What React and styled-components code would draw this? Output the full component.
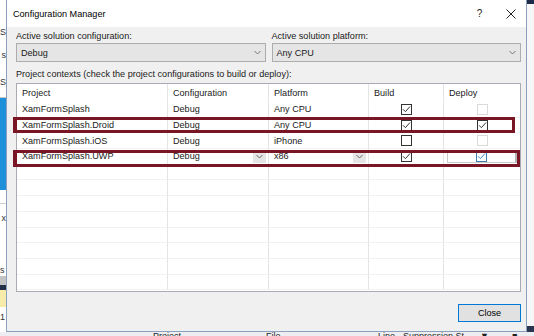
import React from 'react';
import styled, { createGlobalStyle } from 'styled-components';

const Global = createGlobalStyle`
  html, body { margin: 0; padding: 0; background: #ffffff; overflow: hidden; }
  body { font-family: "Liberation Sans", Arial, sans-serif; font-size: 9.1px; color: #1a1a1a; }
  * { box-sizing: border-box; }
`;

const Screen = styled.div`
  width: 534px;
  height: 336px;
  display: flex;
  flex-direction: column;
  overflow: hidden;
  background: #ffffff;
`;

const Main = styled.div`
  display: flex;
  height: 332px;
  flex: none;
`;

const Strip = styled.div`
  width: ${p => p.$w}px;
  flex: none;
  display: flex;
  flex-direction: column;
  overflow: hidden;
  background: #ffffff;
`;

const StripBlock = styled.div`
  flex: none;
  height: ${p => p.$h}px;
  background: ${p => p.$bg || 'transparent'};
  display: flex;
  justify-content: ${p => (p.$end ? 'flex-end' : 'flex-start')};
  align-items: center;
  white-space: nowrap;
  line-height: ${p => p.$h}px;
  color: #333;
  font-size: 9px;
`;

const Dialog = styled.div`
  width: 521px;
  flex: none;
  display: flex;
  flex-direction: column;
  border-left: 1px solid #8aa1bd;
  border-right: 1px solid #8aa1bd;
  border-bottom: 1px solid #8aa1bd;
  background: #f0f0f0;
`;

const TitleBar = styled.div`
  height: 27px;
  flex: none;
  display: flex;
  align-items: center;
  background: #ffffff;
  padding-left: 6px;
`;

const Title = styled.div`
  flex: 1;
  color: #000;
`;

const TitleButton = styled.div`
  width: 31px;
  height: 27px;
  display: flex;
  align-items: center;
  justify-content: center;
  color: #222;
  font-size: 10px;
`;

const Body = styled.div`
  flex: 1;
  display: flex;
  flex-direction: column;
  padding: 3px 5px 0 9px;
`;

const TopRow = styled.div`
  display: grid;
  grid-template-columns: 1fr 1fr;
  column-gap: 6px;
`;

const Field = styled.div`
  display: flex;
  flex-direction: column;
`;

const Label = styled.div`
  height: 12px;
  line-height: 12px;
  margin-top: ${p => p.$mt || 0}px;
  white-space: nowrap;
`;

const Select = styled.div`
  margin-top: 1px;
  height: 19px;
  border: 1px solid #adadad;
  background: #e5e5e5;
  display: flex;
  align-items: center;
  padding: 0 4px 0 4px;
`;

const SelectText = styled.div`
  flex: 1;
`;

const GridBox = styled.div`
  position: relative;
  margin-top: 3px;
  height: 209px;
  border: 1px solid #a8abb2;
  background: #ffffff;
`;

const Table = styled.div`
  display: grid;
  grid-template-columns: 151px 101px 100px 75px 1fr;
  grid-template-rows: 18px repeat(12, 15.7px);
`;

const Cell = styled.div`
  position: relative;
  border-right: ${p => (p.$last ? 'none' : '1px solid #e4e4e4')};
  border-bottom: 1px solid ${p => (p.$head ? '#ffffff' : '#f2f2f2')};
  display: flex;
  align-items: center;
  justify-content: ${p => (p.$center ? 'center' : 'flex-start')};
  padding-left: ${p => (p.$center ? 0 : 5)}px;
  white-space: nowrap;
  overflow: hidden;
`;

const CellText = styled.div`
  flex: 1;
`;

const DropButton = styled.div`
  width: 13px;
  height: 13px;
  margin-right: 2px;
  background: #e5e5e5;
  display: flex;
  align-items: center;
  justify-content: center;
`;

const EditFrame = styled.div`
  position: absolute;
  left: 3px;
  right: 3px;
  top: 1px;
  bottom: 1px;
  border: 1px solid #c9c9c9;
  border-right: 2px solid #b5b5b5;
  display: flex;
  align-items: center;
  justify-content: center;
`;

const Box = styled.div`
  width: 11px;
  height: 11px;
  border: 1px solid ${p => p.$color};
  background: #ffffff;
  display: flex;
  align-items: center;
  justify-content: center;
`;

const Highlight = styled.div`
  position: absolute;
  left: ${p => p.$x}px;
  top: ${p => p.$y}px;
  width: ${p => p.$w}px;
  height: ${p => p.$h}px;
  border: 3px solid #7a1526;
  border-left-width: 4px;
  pointer-events: none;
`;

const Footer = styled.div`
  display: flex;
  justify-content: flex-end;
  padding-top: 12px;
`;

const Button = styled.div`
  width: 63px;
  height: 18px;
  border: 1px solid #0078d7;
  background: #e1e1e1;
  display: flex;
  align-items: center;
  justify-content: center;
  color: #000;
`;

const BottomBar = styled.div`
  height: 4px;
  flex: none;
  background: #eeeef2;
  display: grid;
  grid-template-columns: 153px 113px 112px 25px 77px 32px 1fr;
  overflow: hidden;
`;

const BottomText = styled.div`
  line-height: 8px;
  white-space: nowrap;
  color: #1e1e1e;
  font-size: 9px;
`;

const Chevron = ({ color = '#666' }) => (
  <svg width="7" height="5" viewBox="0 0 7 5">
    <path d="M0.5 1 L3.5 4 L6.5 1" fill="none" stroke={color} strokeWidth="1" />
  </svg>
);

const CloseX = () => (
  <svg width="10" height="10" viewBox="0 0 10 10">
    <path d="M0.5 0.5 L9.5 9.5 M9.5 0.5 L0.5 9.5" stroke="#222" strokeWidth="1" />
  </svg>
);

const Check = ({ state }) => {
  const disabled = state === 'disabled';
  const hover = state === 'hover';
  const checked = state === 'checked' || hover;
  const border = disabled ? '#dadada' : hover ? '#3c7fb1' : '#333';
  const tick = hover ? '#3c8fd0' : '#333';
  return (
    <Box $color={border}>
      {checked && (
        <svg width="9" height="9" viewBox="0 0 9 9">
          <path d="M1 4.3 L3.4 6.7 L8 1.5" fill="none" stroke={tick} strokeWidth="1" />
        </svg>
      )}
    </Box>
  );
};

const rows = [
  { project: 'XamFormSplash', config: 'Debug', platform: 'Any CPU', build: 'checked', deploy: 'disabled' },
  { project: 'XamFormSplash.Droid', config: 'Debug', platform: 'Any CPU', build: 'checked', deploy: 'checked' },
  { project: 'XamFormSplash.iOS', config: 'Debug', platform: 'iPhone', build: 'unchecked', deploy: 'disabled' },
  { project: 'XamFormSplash.UWP', config: 'Debug', platform: 'x86', build: 'checked', deploy: 'hover', active: true },
];

const leftStrip = [
  { h: 26 }, { h: 12, t: 'S' }, { h: 11 }, { h: 12, t: 's', end: true }, { h: 15 },
  { h: 12, t: 'S' }, { h: 9 }, { h: 1, bg: '#c8c8c8' }, { h: 92, bg: '#1e8fd9' },
  { h: 13 }, { h: 1, bg: '#d0d0d0' }, { h: 8 }, { h: 12, t: 'x', end: true }, { h: 40 },
  { h: 12, t: 's' }, { h: 9, bg: '#c4c4c4' }, { h: 5, bg: '#24304a' }, { h: 17, bg: '#f6eba8' },
  { h: 4 }, { h: 12, t: '1' }, { h: 9 },
];

const rightStrip = [
  { h: 4, bg: '#1d2b4a' }, { h: 322, bg: '#f7f7f7' }, { h: 6, bg: '#2a3550' },
];

export default function App() {
  const empty = Array.from({ length: 8 });
  return (
    <>
      <Global />
      <Screen>
        <Main>
          <Strip $w={6}>
            {leftStrip.map((s, i) => (
              <StripBlock key={i} $h={s.h} $bg={s.bg} $end={s.end}>{s.t || null}</StripBlock>
            ))}
          </Strip>
          <Dialog>
            <TitleBar>
              <Title>Configuration Manager</Title>
              <TitleButton>?</TitleButton>
              <TitleButton><CloseX /></TitleButton>
            </TitleBar>
            <Body>
              <TopRow>
                <Field>
                  <Label>Active solution configuration:</Label>
                  <Select>
                    <SelectText>Debug</SelectText>
                    <Chevron color="#777" />
                  </Select>
                </Field>
                <Field>
                  <Label>Active solution platform:</Label>
                  <Select>
                    <SelectText>Any CPU</SelectText>
                    <Chevron color="#777" />
                  </Select>
                </Field>
              </TopRow>
              <Label $mt={6}>Project contexts (check the project configurations to build or deploy):</Label>
              <GridBox>
                <Table>
                  <Cell $head>Project</Cell>
                  <Cell $head>Configuration</Cell>
                  <Cell $head>Platform</Cell>
                  <Cell $head>Build</Cell>
                  <Cell $head $last>Deploy</Cell>
                  {rows.map(r => (
                    <React.Fragment key={r.project}>
                      <Cell>{r.project}</Cell>
                      <Cell>
                        <CellText>{r.config}</CellText>
                        {r.active && <DropButton><Chevron /></DropButton>}
                      </Cell>
                      <Cell>
                        <CellText>{r.platform}</CellText>
                        {r.active && <DropButton><Chevron /></DropButton>}
                      </Cell>
                      <Cell $center><Check state={r.build} /></Cell>
                      <Cell $center $last>
                        {r.active ? (
                          <EditFrame><Check state={r.deploy} /></EditFrame>
                        ) : (
                          <Check state={r.deploy} />
                        )}
                      </Cell>
                    </React.Fragment>
                  ))}
                  {empty.map((_, i) => (
                    <React.Fragment key={i}>
                      <Cell /><Cell /><Cell /><Cell /><Cell $last />
                    </React.Fragment>
                  ))}
                </Table>
                <Highlight $x={-4} $y={33} $w={502} $h={16} />
                <Highlight $x={-4} $y={66} $w={507} $h={17} />
              </GridBox>
              <Footer>
                <Button>Close</Button>
              </Footer>
            </Body>
          </Dialog>
          <Strip $w={7}>
            {rightStrip.map((s, i) => (
              <StripBlock key={i} $h={s.h} $bg={s.bg} />
            ))}
          </Strip>
        </Main>
        <BottomBar>
          <BottomText />
          <BottomText>Project</BottomText>
          <BottomText>File</BottomText>
          <BottomText>Line</BottomText>
          <BottomText>Suppression St</BottomText>
          <BottomText>▼</BottomText>
          <BottomText>■</BottomText>
        </BottomBar>
      </Screen>
    </>
  );
}
